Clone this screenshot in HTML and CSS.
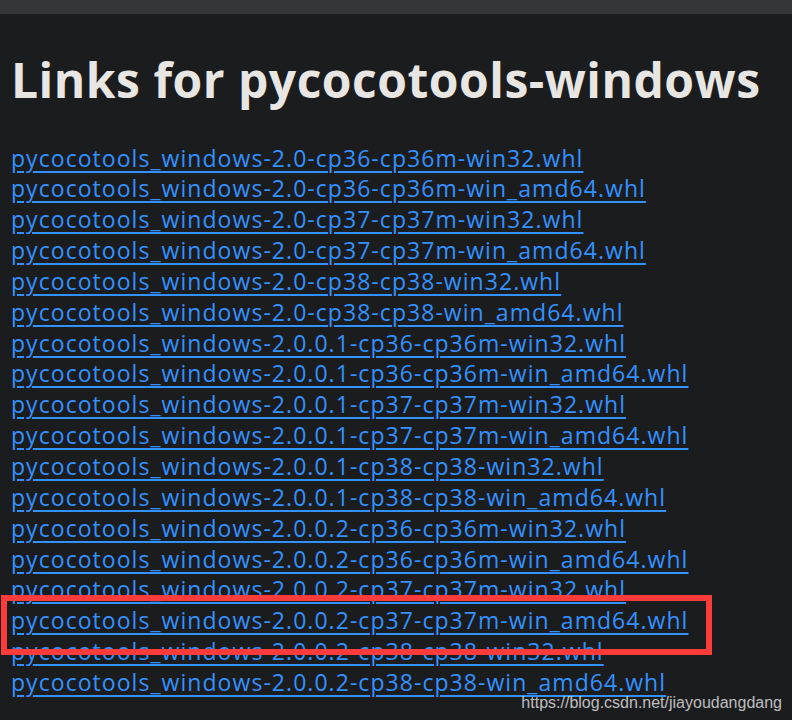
FILE: index.html
```html
<!DOCTYPE html>
<html lang="en">
<head>
    <meta charset="UTF-8">
    <title>Links for pycocotools-windows</title>
    <link rel="stylesheet" href="styles.css">
</head>
<body>
    <div class="topbar"></div>
    <div class="page">
        <h1>Links for pycocotools-windows</h1>
        <div class="links">
            <a href="#">pycocotools_windows-2.0-cp36-cp36m-win32.whl</a><br>
            <a href="#">pycocotools_windows-2.0-cp36-cp36m-win_amd64.whl</a><br>
            <a href="#">pycocotools_windows-2.0-cp37-cp37m-win32.whl</a><br>
            <a href="#">pycocotools_windows-2.0-cp37-cp37m-win_amd64.whl</a><br>
            <a href="#">pycocotools_windows-2.0-cp38-cp38-win32.whl</a><br>
            <a href="#">pycocotools_windows-2.0-cp38-cp38-win_amd64.whl</a><br>
            <a href="#">pycocotools_windows-2.0.0.1-cp36-cp36m-win32.whl</a><br>
            <a href="#">pycocotools_windows-2.0.0.1-cp36-cp36m-win_amd64.whl</a><br>
            <a href="#">pycocotools_windows-2.0.0.1-cp37-cp37m-win32.whl</a><br>
            <a href="#">pycocotools_windows-2.0.0.1-cp37-cp37m-win_amd64.whl</a><br>
            <a href="#">pycocotools_windows-2.0.0.1-cp38-cp38-win32.whl</a><br>
            <a href="#">pycocotools_windows-2.0.0.1-cp38-cp38-win_amd64.whl</a><br>
            <a href="#">pycocotools_windows-2.0.0.2-cp36-cp36m-win32.whl</a><br>
            <a href="#">pycocotools_windows-2.0.0.2-cp36-cp36m-win_amd64.whl</a><br>
            <a href="#">pycocotools_windows-2.0.0.2-cp37-cp37m-win32.whl</a><br>
            <span class="marked"><a href="#">pycocotools_windows-2.0.0.2-cp37-cp37m-win_amd64.whl</a></span><br>
            <a href="#">pycocotools_windows-2.0.0.2-cp38-cp38-win32.whl</a><br>
            <a href="#">pycocotools_windows-2.0.0.2-cp38-cp38-win_amd64.whl</a><br>
        </div>
    </div>
    <div class="watermark">https://blog.csdn.net/jiayoudangdang</div>
</body>
</html>
```

FILE: styles.css
```css
*, *::before, *::after {
    box-sizing: border-box;
}

html, body {
    margin: 0;
    padding: 0;
    background: #1b1c1e;
    height: 100%;
    overflow: hidden;
}

body {
    position: relative;
    font-family: 'Open Sans', 'Noto Sans', sans-serif;
    color: #e8e6e3;
}

.topbar {
    height: 14px;
    background: #35363a;
}

.page {
    padding: 0 11px;
}

h1 {
    margin: 34.7px 0 31.9px;
    font-size: 48px;
    font-weight: 700;
    line-height: 62px;
    letter-spacing: 0.5px;
}

.links {
    font-size: 23px;
    line-height: 30.85px;
    letter-spacing: 1.05px;
}

.links a {
    color: #3391ff;
    text-decoration: underline;
    text-decoration-thickness: 2px;
    text-underline-offset: 4px;
}

.marked {
    position: relative;
}

/* red box drawn over the link */
.marked::after {
    content: "";
    position: absolute;
    left: -10px;
    top: -9px;
    width: 711px;
    height: 60px;
    border: 6px solid #fc3b3b;
}

.watermark {
    position: absolute;
    right: 10px;
    bottom: 8px;
    font-family: 'Liberation Sans', Arial, sans-serif;
    font-size: 16px;
    color: rgba(255, 255, 255, 0.72);
}
```
